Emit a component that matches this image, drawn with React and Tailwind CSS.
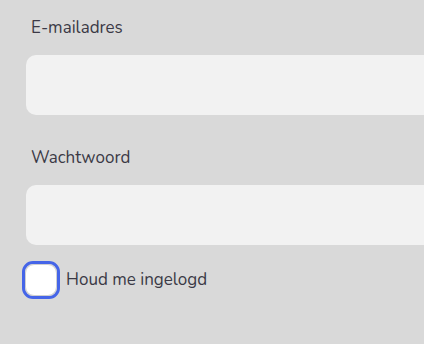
import React from 'react';

function Field({ label, type }) {
  return (
    <div className="flex flex-col">
      <label className="pl-[5px] text-[17px] leading-[24px] text-[#3b3946]">{label}</label>
      <input
        type={type}
        className="mt-[15px] h-[60px] w-[410px] shrink-0 rounded-[10px] bg-[#f2f2f2] px-4 outline-none"
      />
    </div>
  );
}

export default function App() {
  return (
    <div
      className="h-[344px] w-[424px] overflow-hidden bg-[#d9d9d9] pl-[26px] pt-[16px]"
      style={{ fontFamily: 'Nunito, Lato, "Noto Sans", sans-serif' }}
    >
      <div className="flex flex-col gap-[31px]">
        <Field label="E-mailadres" type="email" />
        <Field label="Wachtwoord" type="password" />
      </div>
      <div className="mt-[16px] -ml-[4px] flex items-center gap-[6px]">
        <span className="flex h-[38px] w-[38px] items-center justify-center rounded-[11px] border-[3px] border-[#4565e8]">
          <span className="h-[32px] w-[32px] rounded-[9px] border border-[#cfcfcf] bg-white" />
        </span>
        <span className="text-[17px] leading-[24px] text-[#3b3946]">Houd me ingelogd</span>
      </div>
    </div>
  );
}
